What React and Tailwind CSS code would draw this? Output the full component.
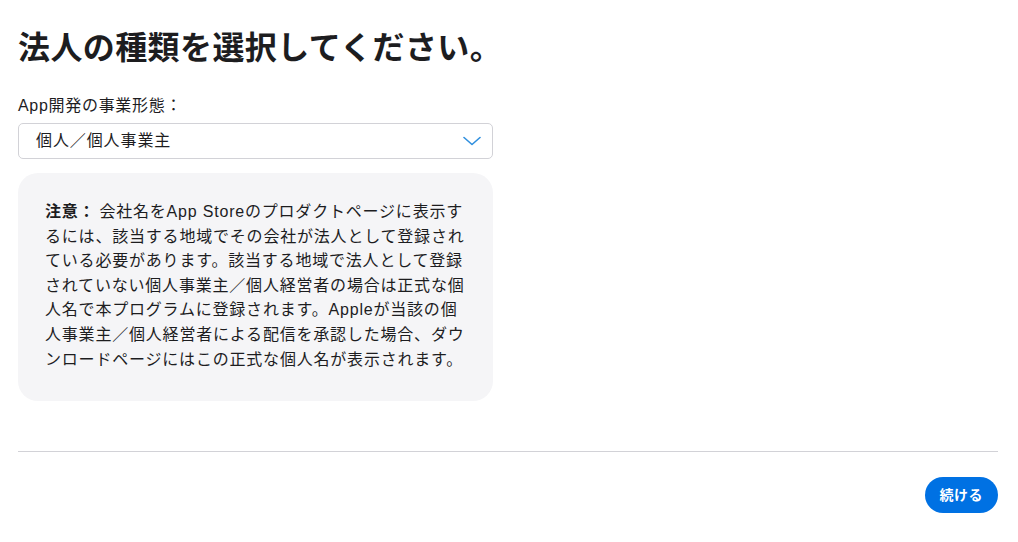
import React from 'react';

const font = { fontFamily: '"Liberation Sans", "Noto Sans CJK JP", sans-serif' };

const App = () => {
    return (
        <div className="w-[1018px] h-[542px] bg-white text-[#1d1d1f] pl-[18px] pr-[20px] pt-[24px] box-border" style={font}>
            <h1 className="text-[32px] leading-[48px] font-bold tracking-[0.4px]">法人の種類を選択してください。</h1>

            <div className="mt-[21px] w-[475px]">
                <label className="block text-[16px] leading-[26px] tracking-[0.7px]">App開発の事業形態：</label>
                <div className="mt-[4px] h-[36px] border border-[#d2d2d7] rounded-[5px] flex items-center justify-between pl-[17px] pr-[11px]">
                    <span className="text-[16px] tracking-[0.9px]">個人／個人事業主</span>
                    <svg width="18" height="10" viewBox="0 0 18 10" fill="none">
                        <path d="M1 1.5 L9 8.5 L17 1.5" stroke="#2f8fde" strokeWidth="1.6" strokeLinecap="round" strokeLinejoin="round" />
                    </svg>
                </div>

                <div className="mt-[14px] bg-[#f5f5f7] rounded-[20px] pl-[27px] pr-[22px] pt-[27px] pb-[29px]">
                    <p className="text-[16px] leading-[24.6px] tracking-[0.8px]">
                        <span className="font-bold mr-[4px]">注意：</span>会社名をApp Storeのプロダクトページに表示するには、該当する地域でその会社が法人として登録されている必要があります。該当する地域で法人として登録されていない個人事業主／個人経営者の場合は正式な個人名で本プログラムに登録されます。Appleが当該の個人事業主／個人経営者による配信を承認した場合、ダウンロードページにはこの正式な個人名が表示されます。
                    </p>
                </div>
            </div>

            <hr className="mt-[50px] border-0 border-t border-[#d2d2d7]" />

            <div className="flex justify-end mt-[25px]">
                <button className="h-[36px] px-[15px] rounded-full bg-[#0071e3] text-white text-[14px] font-bold tracking-[0.5px]">続ける</button>
            </div>
        </div>
    );
};

export default App;
